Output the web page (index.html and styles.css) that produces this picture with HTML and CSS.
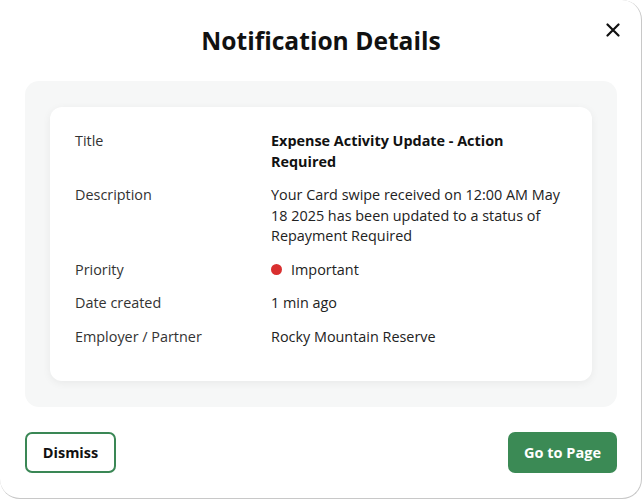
FILE: index.html
```html
<!DOCTYPE html>
<html lang="en">
<head>
<meta charset="utf-8">
<title>Notification Details</title>
<link rel="stylesheet" href="styles.css">
</head>
<body>
<div class="modal">
  <header class="modal-header">
    <h1 class="modal-title">Notification Details</h1>
    <button class="close-btn" aria-label="Close">
      <svg width="14" height="14" viewBox="0 0 14 14"><path d="M1.5 1.5 L12.5 12.5 M12.5 1.5 L1.5 12.5" stroke="#111" stroke-width="2.2" stroke-linecap="round" fill="none"/></svg>
    </button>
  </header>
  <section class="panel">
    <div class="card">
      <dl class="details">
        <dt>Title</dt>
        <dd class="strong">Expense Activity Update - Action Required</dd>
        <dt>Description</dt>
        <dd>Your Card swipe received on 12:00 AM May 18 2025 has been updated to a status of Repayment Required</dd>
        <dt>Priority</dt>
        <dd class="priority"><span class="dot"></span>Important</dd>
        <dt>Date created</dt>
        <dd>1 min ago</dd>
        <dt>Employer / Partner</dt>
        <dd>Rocky Mountain Reserve</dd>
      </dl>
    </div>
  </section>
  <footer class="modal-footer">
    <button class="btn btn-outline">Dismiss</button>
    <button class="btn btn-primary">Go to Page</button>
  </footer>
</div>
</body>
</html>
```

FILE: styles.css
```css
* { box-sizing: border-box; }
html, body { margin: 0; padding: 0; background: #ffffff; }
body { font-family: "Open Sans", "Noto Sans", sans-serif; color: #222; }

.modal {
  width: 642px;
  height: 499px;
  background: #fff;
  border-radius: 20px;
  border-right: 1px solid #c8c8c8;
  border-bottom: 1px solid #c8c8c8;
  padding: 0 24px 0 25px;
  position: relative;
}

.modal-header {
  padding-top: 25px;
  margin-bottom: 24px;
  text-align: center;
}
.modal-title {
  margin: 0;
  font-size: 24.6px;
  line-height: 32px;
  font-weight: 700;
  color: #111;
}
.close-btn {
  position: absolute;
  top: 23px;
  right: 21px;
  width: 14px;
  height: 14px;
  padding: 0;
  border: 0;
  background: none;
  display: flex;
}

.panel {
  background: #f6f7f7;
  border-radius: 14px;
  padding: 26px 25px 26px 25px;
}
.card {
  background: #fff;
  border-radius: 12px;
  box-shadow: 0 2px 8px rgba(0,0,0,0.06);
  padding: 24px 25px 34px 25px;
}

.details {
  margin: 0;
  display: grid;
  grid-template-columns: 196px 1fr;
  row-gap: 13px;
  font-size: 14.4px;
  line-height: 20.5px;
}
.details dt { color: #333; margin: 0; }
.details dd { margin: 0; color: #222; }
.details dd.strong { font-weight: 700; color: #111; }
.priority { display: flex; align-items: center; gap: 9px; }
.dot {
  width: 11px;
  height: 11px;
  border-radius: 50%;
  background: #d92f2f;
  display: inline-block;
}

.modal-footer {
  margin-top: 25px;
  display: flex;
  justify-content: space-between;
}
.btn {
  font-family: "Open Sans", "Noto Sans", sans-serif;
  font-size: 14.5px;
  font-weight: 700;
  height: 41px;
  padding: 0;
  border-radius: 7px;
  cursor: pointer;
}
.btn-outline {
  width: 91px;
  background: #fff;
  color: #111;
  border: 2px solid #3a8755;
}
.btn-primary {
  width: 109px;
  background: #3b8a55;
  color: #fff;
  border: 0;
}
```
